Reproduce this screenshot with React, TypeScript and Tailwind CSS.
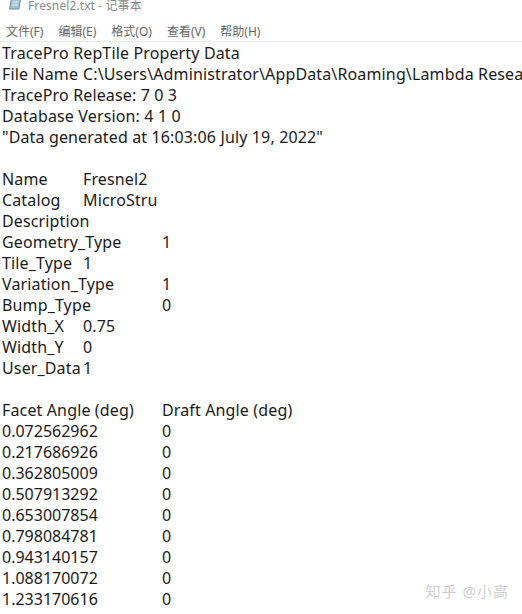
const rows: string[][] = [
  ["TracePro RepTile Property Data"],
  ["File Name", "C:\\Users\\Administrator\\AppData\\Roaming\\Lambda Resea"],
  ["TracePro Release: 7 0 3"],
  ["Database Version: 4 1 0"],
  ['"Data generated at 16:03:06 July 19, 2022"'],
  [],
  ["Name", "Fresnel2"],
  ["Catalog", "MicroStru"],
  ["Description"],
  ["Geometry_Type", "", "1"],
  ["Tile_Type", "1"],
  ["Variation_Type", "", "1"],
  ["Bump_Type", "", "0"],
  ["Width_X", "0.75"],
  ["Width_Y", "0"],
  ["User_Data", "1"],
  [],
  ["Facet Angle (deg)", "", "Draft Angle (deg)"],
];

const data = [
  "0.072562962",
  "0.217686926",
  "0.362805009",
  "0.507913292",
  "0.653007854",
  "0.798084781",
  "0.943140157",
  "1.088170072",
  "1.233170616",
];

const menus = ["文件(F)", "编辑(E)", "格式(O)", "查看(V)", "帮助(H)"];

function Row({ cells }: { cells: string[] }) {
  if (cells.length === 0) return <div className="h-[21px]" />;
  if (cells.length === 1) return <div className="h-[21px] whitespace-pre">{cells[0]}</div>;
  return (
    <div className="grid h-[21px] grid-cols-[80px_80px_1fr] whitespace-pre">
      <span className={cells[1] === "" ? "col-span-2" : ""}>{cells[0]}</span>
      {cells[1] !== "" && <span className="col-span-2 pl-px">{cells[1]}</span>}
      {cells[1] === "" && <span>{cells[2]}</span>}
    </div>
  );
}

export default function App() {
  return (
    <div className="relative h-[614px] w-[522px] overflow-hidden bg-white font-['Noto_Sans','Noto_Sans_CJK_SC',sans-serif]">
      {/* Title bar */}
      <div className="flex h-[15px] items-start gap-[5px] pl-2 text-[12px] leading-[12px] tracking-[0.1px] text-[#8a8a8a]">
        <svg width="15" height="11" viewBox="0 4 15 11">
          <path d="M4 0h9l-2 13H1.500z" fill="#9fc3d6" stroke="#7d8c96" />
          <path d="M5 3h6M4.500 6h6M4 9h6" stroke="#e6f0f5" />
        </svg>
        <span>Fresnel2.txt - 记事本</span>
      </div>

      {/* Menu */}
      <div className="mt-[9px] flex h-[16px] items-center gap-[15px] pl-[6px] text-[12px] text-[#666]">
        {menus.map((m) => (
          <span key={m}>{m}</span>
        ))}
      </div>
      <div className="mt-[1px] h-px bg-[#e8e8e8]" />

      {/* Text content */}
      <div className="pl-[2px] pt-[1px] text-[16px] leading-[21px] text-[#1a1a1a]">
        <div className="tracking-[0.14px]">
          {rows.map((cells, i) => (
            <Row key={i} cells={cells} />
          ))}
        </div>
        {data.map((value) => (
          <Row key={value} cells={[value, "", "0"]} />
        ))}
      </div>

      {/* Watermark */}
      <div className="absolute bottom-[13px] right-[13px] text-[15px] leading-[20px] tracking-[1px] text-[#cfcfcf]">
        知乎 @小高
      </div>
    </div>
  );
}
